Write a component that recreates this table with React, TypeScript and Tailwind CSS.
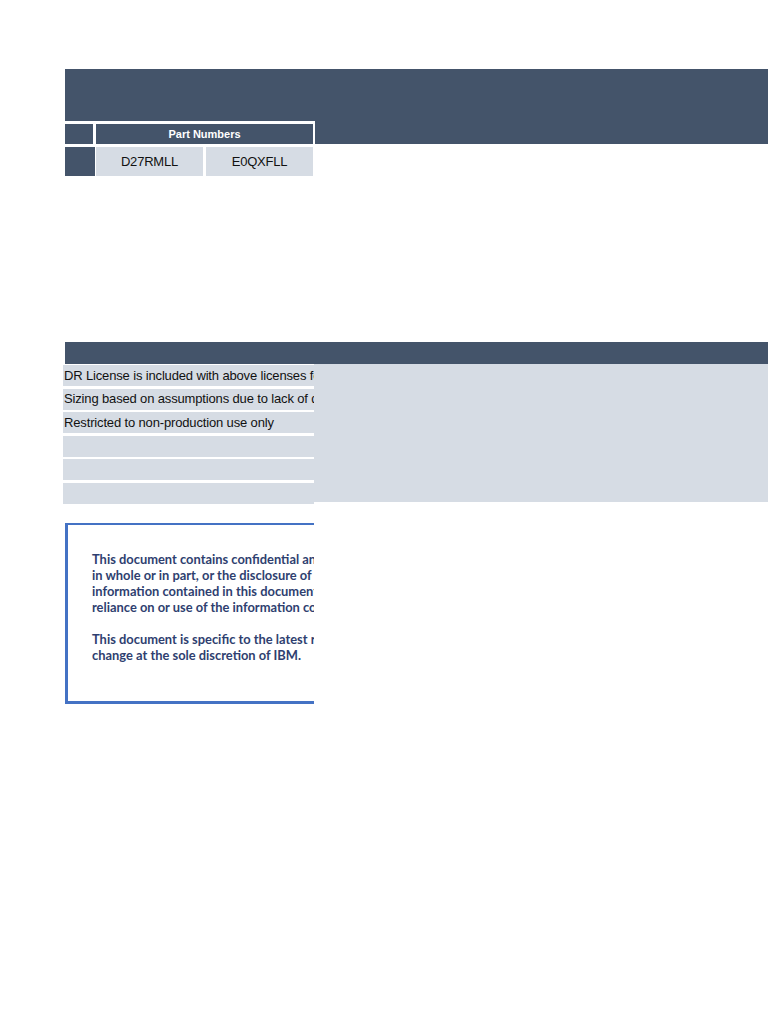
import React from 'react';

const notes = [
  'DR License is included with above licenses for standby use',
  'Sizing based on assumptions due to lack of data provided',
  'Restricted to non-production use only',
  '',
  '',
  '',
];

export default function App() {
  return (
    <div className="min-h-[1024px] w-[768px] overflow-hidden bg-white pt-[69px] pl-[65px] font-['Liberation_Sans',Arial,sans-serif] text-[#111]">
      {/* Part numbers block */}
      <div className="h-[52px] bg-[#44546a]" />
      <div className="flex">
        <div className="w-[250px] shrink-0 pt-[3px]">
          <div className="flex h-[20px]">
            <div className="w-[28px] bg-[#44546a]" />
            <div className="ml-[3px] flex w-[217px] items-center justify-center bg-[#44546a] text-[11px] font-bold text-white">
              Part Numbers
            </div>
          </div>
          <div className="mt-[3px] flex h-[29px]">
            <div className="w-[30px] bg-[#44546a]" />
            <div className="ml-[1px] flex w-[107px] items-center justify-center bg-[#d6dce4] text-[13px] tracking-[-0.2px]">D27RMLL</div>
            <div className="ml-[3px] flex w-[107px] items-center justify-center bg-[#d6dce4] text-[13px] tracking-[-0.2px]">E0QXFLL</div>
          </div>
        </div>
        <div className="h-[23px] flex-1 bg-[#44546a]" />
      </div>

      {/* Notes block */}
      <div className="mt-[166px] h-[22px] bg-[#44546a]" />
      <div className="flex">
        <div className="-ml-[2px] flex w-[251px] shrink-0 flex-col gap-[2.5px] pt-[1px]">
          {notes.map((n, i) => (
            <div key={i} className="flex h-[21px] items-center overflow-hidden whitespace-nowrap bg-[#d6dce4] pl-[1px] text-[13px] tracking-[-0.15px]">
              {n}
            </div>
          ))}
        </div>
        <div className="h-[138px] flex-1 bg-[#d6dce4]" />
      </div>

      {/* Disclaimer box */}
      <div className="mt-[19px] h-[181px] w-[249px] overflow-hidden border-t-2 border-b-[3px] border-l-[3px] border-[#4472c4] pt-[26px] pl-[24px] font-['Lato','Open_Sans',sans-serif] text-[12.9px] leading-[16px] font-bold text-[#2f3f70]">
        <div className="whitespace-nowrap">This document contains confidential and proprietary information of IBM. Reproduction</div>
        <div className="whitespace-nowrap">in whole or in part, or the disclosure of any of the contents, is prohibited. The</div>
        <div className="whitespace-nowrap">information contained in this document is provided AS-IS and IBM is not liable for any</div>
        <div className="whitespace-nowrap">reliance on or use of the information contained herein.</div>
        <div className="mt-[16px] whitespace-nowrap">This document is specific to the latest release of the product and is subject to</div>
        <div className="whitespace-nowrap">change at the sole discretion of IBM.</div>
      </div>
    </div>
  );
}
